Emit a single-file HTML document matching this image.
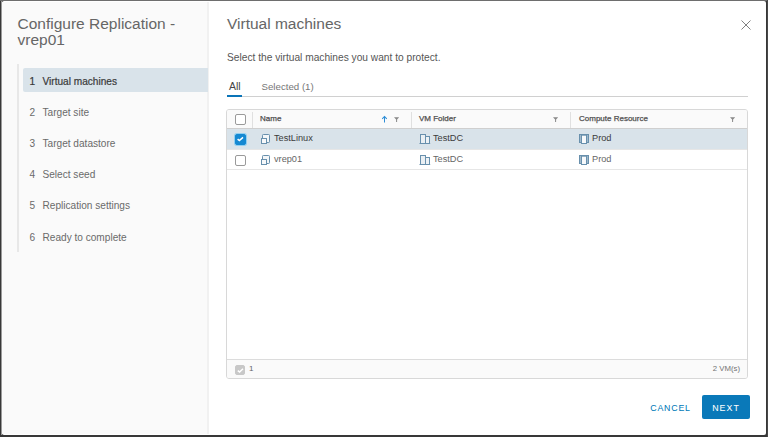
<!DOCTYPE html>
<html><head><meta charset="utf-8">
<style>
*{box-sizing:border-box;margin:0;padding:0}
html,body{width:768px;height:437px;overflow:hidden;background:#383838;font-family:"Liberation Sans",sans-serif}
.abs{position:absolute}
.topbar{position:absolute;left:0;top:0;width:768px;height:1px;background:#6e6e6e}
.modal{position:absolute;left:2px;top:1px;width:764px;height:434px;background:#fff;border-radius:2px;overflow:hidden}
.side{position:absolute;left:0;top:1px;width:207px;height:432px;background:#fafafa;border-right:2px solid #f1f1f1}
.t1{position:absolute;left:15.5px;top:14px;font-size:15.5px;line-height:16px;color:#666;width:190px;white-space:nowrap}
.vline{position:absolute;left:15px;top:62px;width:2px;height:188px;background:#e8e8e8}
.step{position:absolute;left:20.5px;width:185.5px;height:24px;font-size:10.1px;line-height:25px;color:#6a6a6a;border-radius:2px 0 0 2px}
.step .n{position:absolute;left:7px}
.step .l{position:absolute;left:20px}
.step.sel{background:#d9e3ea;color:#3a3a3a;-webkit-text-stroke:0.2px currentColor}
.title{left:225px;top:15px;font-size:15.5px;line-height:16px;color:#666}
.sub{left:225px;top:51px;font-size:10.2px;line-height:12px;color:#565656}
.tab{top:80px;font-size:10px;line-height:12px;color:#777}
.tabline{left:225px;top:95px;width:521px;height:1px;background:#d0d0d0}
.tabsel{left:225px;top:94px;width:15px;height:2px;background:#0a74b8}
.grid{left:224px;top:108px;width:522px;height:270px;border:1px solid #d8d8d8;border-radius:3px;background:#fff;overflow:hidden}
.hdr{position:absolute;left:0;top:0;width:520px;height:19px;background:#fafafa;border-bottom:1px solid #cfcfcf}
.hsep{position:absolute;top:2px;width:1px;height:16px;background:#e0e0e0}
.htxt{position:absolute;top:4px;font-size:8px;line-height:10px;font-weight:normal;-webkit-text-stroke:0.25px currentColor;color:#4f4f4f}
.row{position:absolute;left:0;width:520px;height:21px;border-bottom:1px solid #e6e6e6}
.row.sel{background:#d9e3ea}
.cell{position:absolute;top:3px;font-size:9.2px;line-height:12px;color:#666}
.row.sel .cell{color:#3b3b3b}
.cb{position:absolute;width:11px;height:11px;border:1px solid #9a9a9a;border-radius:2px;background:#fff}
.ftr{position:absolute;left:0;top:249px;width:520px;height:19px;background:#fafafa;border-top:1px solid #dcdcdc}
.btn{top:394px;height:24px;font-size:8.8px;line-height:26px;font-weight:normal;-webkit-text-stroke:0.05px currentColor;letter-spacing:1.05px;text-align:center}
</style></head><body>
<div class="topbar"></div><div class="abs" style="left:767px;top:0;width:1px;height:437px;background:#484848"></div><div class="abs" style="left:1px;top:1px;width:1px;height:434px;background:#9a9a9a"></div>
<div class="modal">
  <div class="side">
    <div class="t1">Configure Replication -<br>vrep01</div>
    <div class="vline"></div>
    <div class="step sel" style="top:66px;line-height:28px"><span class="n">1</span><span class="l">Virtual machines</span></div>
    <div class="step" style="top:97.7px"><span class="n">2</span><span class="l">Target site</span></div>
    <div class="step" style="top:128.9px"><span class="n">3</span><span class="l">Target datastore</span></div>
    <div class="step" style="top:160.1px"><span class="n">4</span><span class="l">Select seed</span></div>
    <div class="step" style="top:191.3px"><span class="n">5</span><span class="l">Replication settings</span></div>
    <div class="step" style="top:222.5px"><span class="n">6</span><span class="l">Ready to complete</span></div>
  </div>
  <div class="abs title">Virtual machines</div>
  <svg class="abs" style="left:736.5px;top:17px" width="14" height="14" viewBox="0 0 14 14"><path d="M2.5 2.5 L11.5 11.5 M11.5 2.5 L2.5 11.5" stroke="#808080" stroke-width="1" fill="none"/></svg>
  <div class="abs sub">Select the virtual machines you want to protect.</div>
  <div class="abs tab" style="left:227px;top:79px;color:#444;font-size:10.5px">All</div>
  <div class="abs tab" style="left:259.5px;font-size:9.7px">Selected (1)</div>
  <div class="abs tabline"></div>
  <div class="abs tabsel"></div>
  <div class="abs grid">
    <div class="hdr">
      <div class="cb" style="left:7.5px;top:4px"></div>
      <div class="hsep" style="left:25px"></div>
      <div class="htxt" style="left:33px">Name</div>
      <svg class="abs" style="left:153px;top:4.5px" width="9" height="10" viewBox="0 0 9 10"><path d="M4.5 7.6 V1.5 M2.2 3.8 L4.5 1.5 L6.8 3.8" stroke="#2b8cd6" stroke-width="1.05" fill="none"/></svg>
      <svg class="abs" style="left:165.5px;top:6.5px" width="7" height="6" viewBox="0 0 7 6"><path d="M1 0.3 H6.2 L4.1 2.6 V5 H3.1 V2.6 Z" fill="#888"/></svg>
      <div class="hsep" style="left:184px"></div>
      <div class="htxt" style="left:192px">VM Folder</div>
      <svg class="abs" style="left:325px;top:6.5px" width="7" height="6" viewBox="0 0 7 6"><path d="M1 0.3 H6.2 L4.1 2.6 V5 H3.1 V2.6 Z" fill="#888"/></svg>
      <div class="hsep" style="left:343px"></div>
      <div class="htxt" style="left:352px">Compute Resource</div>
      <svg class="abs" style="left:502px;top:6.5px" width="7" height="6" viewBox="0 0 7 6"><path d="M1 0.3 H6.2 L4.1 2.6 V5 H3.1 V2.6 Z" fill="#888"/></svg>
    </div>
    <div class="row sel" style="top:19px">
      <div class="cb" style="left:8px;top:5px;background:#1689d2;border-color:#1689d2;box-shadow:0 0 0 1px #92cff0"><svg class="abs" style="left:0;top:0" width="9" height="9" viewBox="0 0 9 9"><path d="M1.6 4.1 L3.4 5.6 L7 2.4" stroke="#fff" stroke-width="1.5" fill="none"/></svg></div>
      <svg class="abs" style="left:33px;top:5px" width="12" height="11" viewBox="0 0 12 11"><rect x="2.5" y="0.5" width="7" height="8" rx="0.8" fill="#f3f6f8" stroke="#6890ad"/><rect x="1.5" y="4.5" width="5" height="5" fill="#f6f8fa" stroke="#6890ad"/></svg>
      <div class="cell" style="left:47px">TestLinux</div>
      <svg class="abs" style="left:192px;top:5px" width="12" height="11" viewBox="0 0 12 11"><rect x="1.5" y="0.5" width="5" height="9" fill="#eaeff3" stroke="#6890ad"/><rect x="6.5" y="2.5" width="4" height="7" fill="#eef2f5" stroke="#6890ad"/><path d="M0.5 9.5 H11.2" stroke="#6890ad"/></svg>
      <div class="cell" style="left:206px">TestDC</div>
      <svg class="abs" style="left:351px;top:5px" width="12" height="11" viewBox="0 0 12 11"><rect x="1.5" y="0.5" width="9" height="8" fill="#e6edf2" stroke="#6890ad"/><path d="M2.5 1 V8" stroke="#9fb8ca"/><path d="M9.5 1 V8" stroke="#9fb8ca"/><rect x="3.5" y="1.2" width="5" height="8.3" fill="#f7f9fb" stroke="#6890ad"/></svg>
      <div class="cell" style="left:365px">Prod</div>
    </div>
    <div class="row" style="top:40px;height:20px">
      <div class="cb" style="left:7.6px;top:4.6px"></div>
      <svg class="abs" style="left:33px;top:5px" width="12" height="11" viewBox="0 0 12 11"><rect x="2.5" y="0.5" width="7" height="8" rx="0.8" fill="#f3f6f8" stroke="#6890ad"/><rect x="1.5" y="4.5" width="5" height="5" fill="#f6f8fa" stroke="#6890ad"/></svg>
      <div class="cell" style="left:47px">vrep01</div>
      <svg class="abs" style="left:192px;top:5px" width="12" height="11" viewBox="0 0 12 11"><rect x="1.5" y="0.5" width="5" height="9" fill="#eaeff3" stroke="#6890ad"/><rect x="6.5" y="2.5" width="4" height="7" fill="#eef2f5" stroke="#6890ad"/><path d="M0.5 9.5 H11.2" stroke="#6890ad"/></svg>
      <div class="cell" style="left:206px">TestDC</div>
      <svg class="abs" style="left:351px;top:5px" width="12" height="11" viewBox="0 0 12 11"><rect x="1.5" y="0.5" width="9" height="8" fill="#e6edf2" stroke="#6890ad"/><path d="M2.5 1 V8" stroke="#9fb8ca"/><path d="M9.5 1 V8" stroke="#9fb8ca"/><rect x="3.5" y="1.2" width="5" height="8.3" fill="#f7f9fb" stroke="#6890ad"/></svg>
      <div class="cell" style="left:365px">Prod</div>
    </div>
    <div class="ftr">
      <div class="cb" style="left:7.7px;top:4.5px;width:10.5px;height:10.5px;background:#c8c8c8;border-color:#c8c8c8"><svg class="abs" style="left:0;top:0" width="9" height="9" viewBox="0 0 9 9"><path d="M1.8 4.6 L3.6 6 L7 2.8" stroke="#fff" stroke-width="1.5" fill="none"/></svg></div>
      <div class="abs" style="left:22px;top:3.5px;font-size:8px;line-height:10px;color:#666">1</div>
      <div class="abs" style="right:7px;top:4px;font-size:7.8px;line-height:10px;color:#737373">2 VM(s)</div>
    </div>
  </div>
  <div class="abs btn" style="left:644.5px;width:48px;color:#0079b8;letter-spacing:0.8px">CANCEL</div>
  <div class="abs btn" style="left:700px;width:48px;background:#0a79b9;color:#fff;border-radius:2px">NEXT</div>
</div>
</body></html>
